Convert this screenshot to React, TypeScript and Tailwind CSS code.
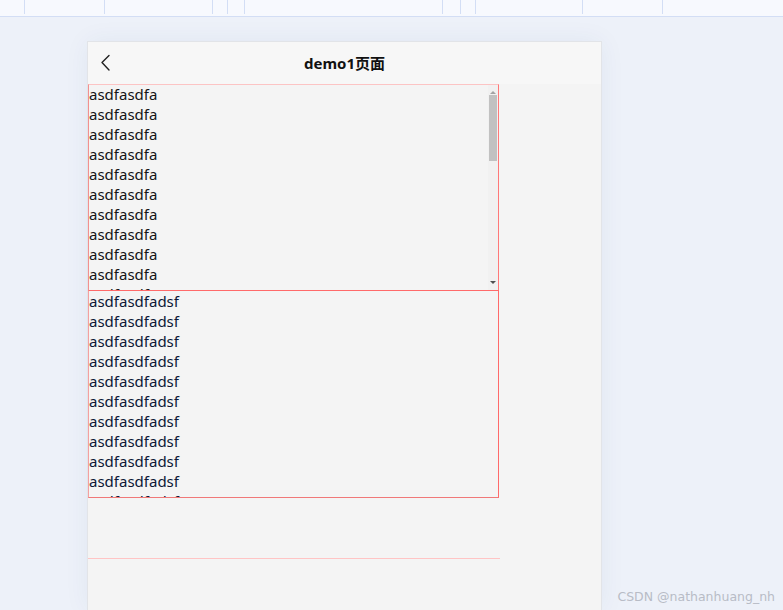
import React from "react";

const font = { fontFamily: '"Noto Sans", "Noto Sans CJK SC", sans-serif' };

export default function App() {
  const list1 = Array.from({ length: 11 }, () => "asdfasdfa");
  const list2 = Array.from({ length: 11 }, () => "asdfasdfadsf");
  return (
    <div
      className="relative w-[783px] h-[610px] overflow-hidden bg-[#edf1f9] flex flex-col font-['Noto_Sans','Noto_Sans_CJK_SC',sans-serif]"
    >
      {/* top bar */}
      <div className="h-[17px] shrink-0 bg-[#f7f9fe] border-b border-[#d3def5] flex items-start">
        <div className="ml-[24px] w-px h-[14px] bg-[#d3def5]" />
        <div className="ml-[79px] w-px h-[14px] bg-[#d3def5]" />
        <div className="ml-[107px] w-px h-[14px] bg-[#d3def5]" />
        <div className="ml-[14px] w-px h-[14px] bg-[#d3def5]" />
        <div className="ml-[16px] w-px h-[14px] bg-[#d3def5]" />
        <div className="ml-[197px] w-px h-[14px] bg-[#d3def5]" />
        <div className="ml-[17px] w-px h-[14px] bg-[#d3def5]" />
        <div className="ml-[14px] w-px h-[14px] bg-[#d3def5]" />
        <div className="ml-[106px] w-px h-[14px] bg-[#d3def5]" />
        <div className="ml-[79px] w-px h-[14px] bg-[#d3def5]" />
      </div>

      {/* phone panel */}
      <div className="mt-[24px] ml-[87px] w-[515px] flex-1 flex flex-col border-t border-x border-[#e2e4e8] bg-[#f4f4f4] shadow-[0_0_24px_rgba(40,60,120,0.06)]">
        {/* header */}
        <div className="h-[42px] shrink-0 bg-[#f7f7f7] flex items-center relative">
          <svg className="ml-[11px]" width="14" height="18" viewBox="0 0 14 18" fill="none">
            <polyline points="10,1.5 3,8.5 10,16" stroke="#222" strokeWidth="1.4" strokeLinecap="round" strokeLinejoin="round" />
          </svg>
          <div className="flex-1 text-center pr-[25px] text-[15px] font-bold text-[#111]" style={font}>
            demo1页面
          </div>
        </div>

        {/* box 1 with scrollbar */}
        <div className="w-[411px] h-[207px] flex border border-[#ff7878] border-t-[#fcc4c4] border-l-[#f29090] overflow-hidden">
          <div className="flex-1 -mt-[1px] overflow-hidden text-[15px] leading-[20px] text-[#141414]" style={font}>
            {list1.map((t, i) => (
              <div key={i}>{t}</div>
            ))}
          </div>
          <div className="w-[10px] shrink-0 bg-[#f1f1f1] flex flex-col items-center">
            <div className="h-[9px] flex items-end justify-center">
              <div className="w-0 h-0 border-x-[3px] border-x-transparent border-b-[3px] border-b-[#a3a3a3]" />
            </div>
            <div className="mt-[1px] w-[8px] h-[66px] bg-[#c1c1c1]" />
            <div className="flex-1" />
            <div className="h-[9px] flex items-start justify-center">
              <div className="w-0 h-0 border-x-[3px] border-x-transparent border-t-[3px] border-t-[#505050]" />
            </div>
          </div>
        </div>

        {/* box 2 */}
        <div className="-mt-px w-[411px] h-[208px] border border-[#ff6a6a] border-l-[#f4a0a0] border-b-[#f07878] overflow-hidden text-[15px] leading-[20px] text-[#0c1836]" style={font}>
          {list2.map((t, i) => (
            <div key={i}>{t}</div>
          ))}
        </div>

        {/* divider line */}
        <div className="mt-[60px] w-[412px] h-px bg-[#ffc4c4]" />
      </div>

      {/* watermark */}
      <div className="absolute right-[8px] bottom-[3px] text-[12.5px] text-[#b8bcc6]" style={{ fontFamily: '"DejaVu Sans", sans-serif' }}>
        CSDN @nathanhuang_nh
      </div>
    </div>
  );
}
